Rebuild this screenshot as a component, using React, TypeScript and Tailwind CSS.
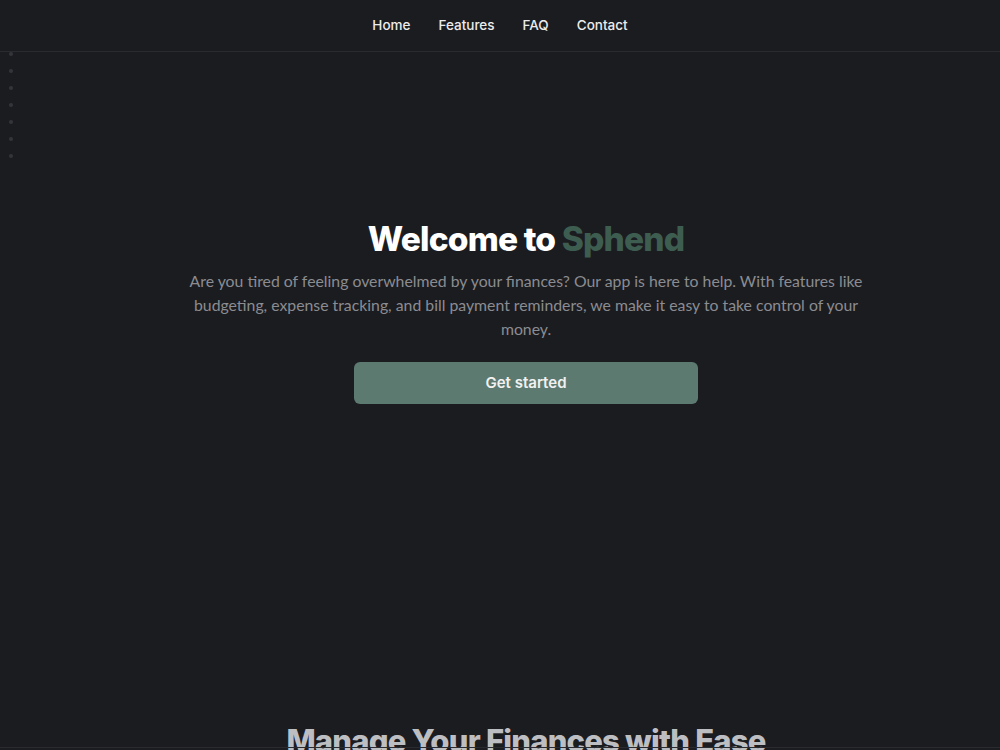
export default function App() {
  return (
    <div className="min-h-screen bg-[#1b1c20] font-['Inter',sans-serif] text-white relative overflow-hidden">
      {/* decorative dots on the left edge */}
      <div className="absolute left-[9px] top-[52px] flex flex-col gap-[13px]">
        {[0, 1, 2, 3, 4, 5, 6].map((i) => (
          <div key={i} className="w-1 h-1 rounded-full bg-[#34353a]" />
        ))}
      </div>

      <header className="h-[52px] border-b border-[#2a2b30] flex items-center justify-center">
        <nav className="flex gap-7 text-[13.5px] font-medium text-[#ececec]">
          <a href="#">Home</a>
          <a href="#">Features</a>
          <a href="#">FAQ</a>
          <a href="#">Contact</a>
        </nav>
      </header>

      <main className="flex flex-col items-center pl-[52px]">
        <section className="pt-[167px] flex flex-col items-center text-center">
          <h1 className="text-[33.5px] leading-10 font-extrabold tracking-tight">
            Welcome to <span className="text-[#3e5d51]">Sphend</span>
          </h1>
          <p className="mt-[10px] max-w-[680px] font-['Lato',sans-serif] text-[15.8px] leading-6 text-[#8b8c91]">
            Are you tired of feeling overwhelmed by your finances? Our app is here to help. With features like
            budgeting, expense tracking, and bill payment reminders, we make it easy to take control of your money.
          </p>
          <button className="mt-[21px] w-[344px] h-[42px] rounded-md bg-[#5c7a70] text-[15px] font-semibold text-[#f1f1f1]">
            Get started
          </button>
        </section>

        <section className="pt-[319px]">
          <h2 className="text-[31px] leading-9 font-extrabold tracking-tight text-[#bdbec2]">
            Manage Your Finances with Ease
          </h2>
        </section>
      </main>

      <div className="absolute left-0 right-0 top-[747px] h-px bg-[#2a2b30]" />
    </div>
  );
}
